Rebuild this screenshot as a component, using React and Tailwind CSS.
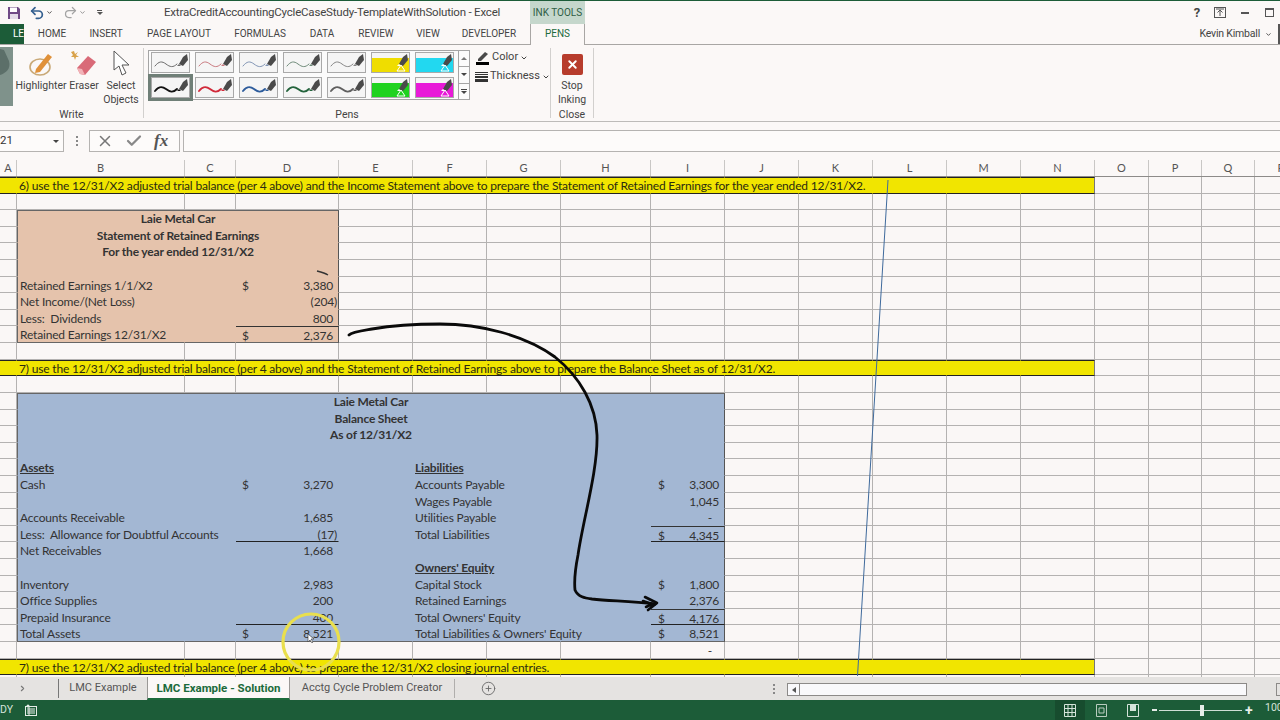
import React from 'react';
import clsx from 'clsx';
import { Undo2, Redo2, X, Check, CirclePlus, ChevronRight, ChevronDown } from 'lucide-react';

const GRID = 'grid grid-cols-[17px_168px_51px_103px_74px_74px_74px_90px_74px_74px_74px_74px_74px_74px_54px_53px_53px_53px]';
const LETTERS = ['A', 'B', 'C', 'D', 'E', 'F', 'G', 'H', 'I', 'J', 'K', 'L', 'M', 'N', 'O', 'P', 'Q', 'R'];
const B = 1, D = 3, F = 5, I = 8, N = 13;

// sheet contents, keyed by row index from the first yellow row
const YELLOW = {
  0: '6) use the 12/31/X2 adjusted trial balance (per 4 above) and the Income Statement above to prepare the Statement of Retained Earnings for the year ended 12/31/X2.',
  11: '7) use the 12/31/X2 adjusted trial balance (per 4 above) and the Statement of Retained Earnings above to prepare the Balance Sheet as of 12/31/X2.',
  29: '7) use the 12/31/X2 adjusted trial balance (per 4 above) to prepare the 12/31/X2 closing journal entries.',
};

const TITLES = {
  2: 'Laie Metal Car',
  3: 'Statement of Retained Earnings',
  4: 'For the year ended 12/31/X2',
  13: 'Laie Metal Car',
  14: 'Balance Sheet',
  15: 'As of 12/31/X2',
};

const LABELS = {
  6: { [B]: 'Retained Earnings 1/1/X2' },
  7: { [B]: 'Net Income/(Net Loss)' },
  8: { [B]: 'Less:  Dividends' },
  9: { [B]: 'Retained Earnings 12/31/X2' },
  17: { [B]: '!Assets', [F]: '!Liabilities' },
  18: { [B]: 'Cash', [F]: 'Accounts Payable' },
  19: { [F]: 'Wages Payable' },
  20: { [B]: 'Accounts Receivable', [F]: 'Utilities Payable' },
  21: { [B]: 'Less:  Allowance for Doubtful Accounts', [F]: 'Total Liabilities' },
  22: { [B]: 'Net Receivables' },
  23: { [F]: "!Owners' Equity" },
  24: { [B]: 'Inventory', [F]: 'Capital Stock' },
  25: { [B]: 'Office Supplies', [F]: 'Retained Earnings' },
  26: { [B]: 'Prepaid Insurance', [F]: "Total Owners' Equity" },
  27: { [B]: 'Total Assets', [F]: "Total Liabilities & Owners' Equity" },
};

const AMOUNTS = {
  6: { [D]: { $: true, v: '3,380' } },
  7: { [D]: { v: '(204)', paren: true } },
  8: { [D]: { v: '800' } },
  9: { [D]: { $: true, v: '2,376', top: true } },
  18: { [D]: { $: true, v: '3,270' }, [I]: { $: true, v: '3,300' } },
  19: { [I]: { v: '1,045' } },
  20: { [D]: { v: '1,685' }, [I]: { v: '-', dash: true } },
  21: { [D]: { v: '(17)', paren: true, bottom: true }, [I]: { $: true, v: '4,345', top: true, bottom: true } },
  22: { [D]: { v: '1,668' } },
  24: { [D]: { v: '2,983' }, [I]: { $: true, v: '1,800' } },
  25: { [D]: { v: '200' }, [I]: { v: '2,376' } },
  26: { [D]: { v: '400', bottom: true }, [I]: { $: true, v: '4,176', top: true, bottom: true } },
  27: { [D]: { $: true, v: '8,521' }, [I]: { $: true, v: '8,521' } },
  28: { [I]: { v: '-', dash: true } },
};

function boxOf(r, c) {
  if (r >= 2 && r <= 9 && c >= B && c <= D) return { fill: 'bg-[#e5c3ac]', first: r === 2, last: r === 9, right: c === D };
  if (r >= 13 && r <= 27 && c >= B && c <= I) return { fill: 'bg-[#a3b7d3]', first: r === 13, last: r === 27, right: c === I };
  return null;
}

function Amount({ cell, col }) {
  return (
    <div className={clsx('flex justify-between', col === D ? 'pl-[6px]' : 'pl-[7px]', cell.paren ? 'pr-[1px]' : cell.dash ? 'pr-[12px]' : 'pr-[5px]')}>
      <span>{cell.$ ? '$' : ''}</span>
      <span>{cell.v}</span>
    </div>
  );
}

function Cell({ r, c }) {
  const box = boxOf(r, c);
  const yellow = YELLOW[r] !== undefined && c <= N;
  const amount = AMOUNTS[r]?.[c];
  const label = LABELS[r]?.[c];
  const strong = label?.startsWith('!');
  return (
    <div
      className={clsx(
        'min-w-0 whitespace-pre border-r border-b',
        // grid items paint as a unit, so text spilling over the next cells has to sit above them
        (label || (yellow && c === B)) && 'z-[1]',
        !box && !yellow && 'border-[#b4b2b1]',
        box && 'border-transparent',
        box?.fill,
        box?.first && 'border-t border-t-[#666666]',
        box?.last && 'border-b-[#666666]',
        box?.right && 'border-r-[#555555]',
        box && c === B && 'border-l border-l-[#666666]',
        yellow && 'border-y border-x-transparent border-y-[#222222] bg-[#f1e500]',
        c === N && yellow && 'border-r-[#777777]',
        amount?.top && 'border-t border-t-[#333333]',
        amount?.bottom && 'border-b-[#222222]',
      )}
    >
      {yellow && c === B && <div className="-mt-[1px] pl-[2px] text-[#2b2b10]">{YELLOW[r]}</div>}
      {label && (
        <div className={clsx('pl-[2px]', strong && 'font-bold underline')}>{strong ? label.slice(1) : label}</div>
      )}
      {amount && <Amount cell={amount} col={c} />}
    </div>
  );
}

function TitleCell({ r }) {
  const blue = r >= 13;
  return (
    <div
      className={clsx(
        'whitespace-nowrap border-r border-l border-b border-transparent text-center font-bold',
        blue ? 'col-span-8 border-l-[#666666] border-r-[#555555] bg-[#a3b7d3]' : 'col-span-3 border-l-[#666666] border-r-[#555555] bg-[#e5c3ac]',
        (r === 2 || r === 13) && 'border-t border-t-[#666666] leading-[15px]',
      )}
    >
      {TITLES[r]}
    </div>
  );
}

function Row({ r }) {
  const cols = [];
  for (let c = 0; c < LETTERS.length; c++) {
    if (TITLES[r] && c === B) {
      cols.push(<TitleCell key={c} r={r} />);
      c += r >= 13 ? 7 : 2;
    } else {
      cols.push(<Cell key={c} r={r} c={c} />);
    }
  }
  return cols;
}

function Sheet() {
  const rows = Array.from({ length: 31 }, (_, i) => i);
  return (
    <div className="h-[500px] shrink-0 overflow-hidden bg-[#faf7f6] font-['Lato',sans-serif] text-[12px] leading-[17px] tracking-[-0.18px] text-[#333333]">
      <div className={clsx(GRID, 'auto-rows-[16.62px]')}>
        {rows.map((r) => <Row key={r} r={r} />)}
      </div>
    </div>
  );
}

function Squiggle({ color, w }) {
  return (
    <path d="M3 13 C7 8 10 8 14 11 C18 14 21 15 25 11" fill="none" stroke={color} strokeWidth={w} strokeLinecap="round" />
  );
}

function PenSwatch({ color, thick, fill, tri, selected }) {
  return (
    <div className={clsx('h-[21px] w-[39px] border border-[#a9a9a9] bg-[#f5f5f5]', selected && 'outline-3 outline-[#6f7f77]')}>
      <svg viewBox="0 0 37 19" className="block h-full w-full">
        {fill ? (
          <rect x="0" y="5" width="37" height="14" fill={fill} />
        ) : (
          <Squiggle color={color} w={thick ? 1.9 : 1} />
        )}
        <path d="M27 11 L31 4 L35 1 L36 7 L31 13 Z" fill="#4a4a4a" />
        <path d="M25 13 L27 11 L29 13 Z" fill={fill ? '#ffffff' : color} />
        {tri && <path d="M25 18 L29 12 L33 18 Z" fill="none" stroke="#ffffff" strokeWidth="1" />}
      </svg>
    </div>
  );
}

function Gallery() {
  return (
    <div className="flex h-[50px] w-[322px] shrink-0 border border-[#a5a5a5] bg-[#fbfbfb]">
      <div className="grid grid-cols-[repeat(7,39px)] gap-x-[5px] gap-y-[4px] py-[1px] pl-[2px]">
        <PenSwatch color="#6a6a6a" />
        <PenSwatch color="#c9787e" />
        <PenSwatch color="#8094b4" />
        <PenSwatch color="#6d8a78" />
        <PenSwatch color="#858585" />
        <PenSwatch fill="#efdd00" tri />
        <PenSwatch fill="#22d8f0" tri />
        <PenSwatch color="#111111" thick selected />
        <PenSwatch color="#d12a3a" thick />
        <PenSwatch color="#2d5c9c" thick />
        <PenSwatch color="#23633c" thick />
        <PenSwatch color="#5f5f5f" thick />
        <PenSwatch fill="#1fd21f" tri />
        <PenSwatch fill="#e81ad8" tri />
      </div>
      <div className="ml-[4px] flex w-[11px] flex-col divide-y divide-[#a5a5a5] border-l border-[#a5a5a5] text-[#444444]">
        <div className="flex flex-1 items-center justify-center"><div className="h-0 w-0 border-x-[3px] border-b-[3px] border-x-transparent border-b-[#777777]" /></div>
        <div className="flex flex-1 items-center justify-center"><div className="h-0 w-0 border-x-[3px] border-t-[3px] border-x-transparent border-t-[#444444]" /></div>
        <div className="flex flex-1 flex-col items-center justify-center gap-[1px]">
          <div className="h-[1px] w-[6px] bg-[#444444]" />
          <div className="h-0 w-0 border-x-[3px] border-t-[3px] border-x-transparent border-t-[#444444]" />
        </div>
      </div>
    </div>
  );
}

function RibbonButton({ width, icon, children }) {
  return (
    <div className={clsx('flex shrink-0 flex-col items-center pt-[5px] text-center leading-[14px]', width)}>
      <div className="mb-[1px] flex h-[28px] items-center justify-center">{icon}</div>
      {children}
    </div>
  );
}

function Group({ width, label, children }) {
  return (
    <div className={clsx('flex h-full shrink-0 flex-col', width)}>
      <div className="flex-1">{children}</div>
      <div className="-mb-[1px] h-[14px] text-center leading-[14px]">{label}</div>
    </div>
  );
}

function Separator() {
  return <div className="my-[3px] w-[1px] shrink-0 bg-[#d2d0ce]" />;
}

function Ribbon() {
  return (
    <div className="flex h-[77px] shrink-0 border-b border-[#bdbbb9] bg-[#fbf8f7] text-[10.5px] text-[#444444]">
      <Group width="w-[143px]" label="Write">
        <div className="flex h-full">
          <div className="my-[2px] w-[13px] shrink-0 bg-[#7f928b]">
            <svg width="13" height="40" viewBox="0 0 13 40">
              <path d="M0 28 C6 26 11 22 9 14 L4 3 L0 2 Z" fill="#5c6f69" />
            </svg>
          </div>
          <RibbonButton width="w-[56px]" icon={
            <svg width="30" height="28" viewBox="0 0 30 28">
              <ellipse cx="14" cy="17" rx="10" ry="8" fill="none" stroke="#c9a977" strokeWidth="1.6" />
              <path d="M10 19 L22 4 L26 7 L14 22 L9 23 Z" fill="#e0913a" />
            </svg>
          }>Highlighter</RibbonButton>
          <RibbonButton width="w-[30px]" icon={
            <svg width="30" height="28" viewBox="0 0 30 28">
              <path d="M8 18 L19 6 L27 12 L16 25 L11 24 Z" fill="#d96a78" />
              <path d="M8 18 L11 24 L16 25 L13 19 Z" fill="#f2b3b8" />
              <path d="M5 1 L6 4 L9 2 L7 5 L10 7 L7 7 L6 10 L5 7 L2 7 L4 5 L2 2 Z" fill="#d9a24a" />
            </svg>
          }>Eraser</RibbonButton>
          <RibbonButton width="w-[44px]" icon={
            <svg width="20" height="28" viewBox="0 0 20 28">
              <path d="M3 1 L3 20 L8 16 L11 25 L15 23 L11 15 L18 15 Z" fill="#ffffff" stroke="#555555" strokeWidth="1" />
            </svg>
          }>Select Objects</RibbonButton>
        </div>
      </Group>
      <Separator />
      <Group width="w-[406px]" label="Pens">
        <div className="flex pt-[5px] pl-[4px]">
          <Gallery />
          <div className="-mt-[1px] ml-[5px] flex flex-col gap-[2px] text-[11px]">
            <div className="flex h-[17px] items-center gap-[2px]">
              <svg width="15" height="15" viewBox="0 0 15 15">
                <path d="M3 9 L10 2 L13 4 L6 11 L3 11 Z" fill="#4a4a4a" />
                <rect x="1" y="12" width="13" height="3" fill="#000000" />
              </svg>
              <span>Color</span>
              <ChevronDown size={8} strokeWidth={3} />
            </div>
            <div className="flex h-[17px] items-center gap-[2px]">
              <div className="flex w-[13px] flex-col gap-[1px]">
                <div className="h-[1px] bg-[#333333]" />
                <div className="h-[1px] bg-[#333333]" />
                <div className="h-[2px] bg-[#333333]" />
                <div className="h-[3px] bg-[#333333]" />
              </div>
              <span>Thickness</span>
              <ChevronDown size={8} strokeWidth={3} />
            </div>
          </div>
        </div>
      </Group>
      <Separator />
      <Group width="w-[42px]" label="Close">
        <RibbonButton width="w-full" icon={
          <div className="flex h-[21px] w-[21px] items-center justify-center rounded-[2px] bg-[#b73c2c]">
            <X size={13} color="#ffffff" strokeWidth={3.5} />
          </div>
        }>Stop Inking</RibbonButton>
      </Group>
      <Separator />
    </div>
  );
}

function TitleBar() {
  return (
    <div className="flex h-[24px] shrink-0 items-center border-t border-[#1c5c38] bg-[#fbf8f7] text-[11.5px] text-[#444444]">
      <svg width="14" height="14" viewBox="0 0 14 14" className="ml-[7px] shrink-0">
        <path d="M1 1 H11 L13 3 V13 H1 Z" fill="#6f4a86" />
        <rect x="3" y="1.5" width="7" height="4.5" fill="#ffffff" />
        <rect x="3" y="8" width="8" height="5" fill="#e4dde9" />
      </svg>
      <Undo2 size={16} strokeWidth={2.6} color="#345f8f" className="ml-[8px] shrink-0" />
      <ChevronDown size={7} strokeWidth={3} className="ml-[1px] shrink-0" />
      <Redo2 size={15} strokeWidth={2} color="#a3a3a3" className="ml-[10px] shrink-0" />
      <ChevronDown size={7} strokeWidth={3} color="#8a8a8a" className="ml-[1px] shrink-0" />
      <div className="ml-[10px] flex w-[7px] shrink-0 flex-col items-center gap-[1px]">
        <div className="h-[1px] w-[5px] bg-[#555555]" />
        <div className="h-0 w-0 border-x-[3px] border-t-[3px] border-x-transparent border-t-[#555555]" />
      </div>
      <div className="ml-[61px] w-[303px] shrink-0 whitespace-nowrap tracking-[-0.2px]">ExtraCreditAccountingCycleCaseStudy-TemplateWithSolution - Excel</div>
      <div className="ml-[63px] flex h-full w-[55px] shrink-0 items-center justify-center bg-[#c5d7cc] text-[10px] text-[#2f5d45]">INK TOOLS</div>
      <div className="ml-[595px] flex w-[100px] shrink-0 items-center">
        <span className="w-[34px] text-center text-[13px] font-bold">?</span>
        <svg width="12" height="11" viewBox="0 0 12 11" className="shrink-0">
          <rect x="0.5" y="0.5" width="11" height="10" fill="none" stroke="#555555" />
          <path d="M6 9 V4 M3.5 5.5 L6 3 L8.5 5.5 M2 2 H10" fill="none" stroke="#555555" />
        </svg>
        <div className="ml-[15px] h-[2px] w-[8px] shrink-0 bg-[#555555]" />
        <div className="ml-[16px] h-[9px] w-[9px] shrink-0 border border-t-2 border-[#555555]" />
      </div>
    </div>
  );
}

const TABS = [
  ['HOME', 'w-[50px] ml-[3px]'],
  ['INSERT', 'w-[58px]'],
  ['PAGE LAYOUT', 'w-[88px]'],
  ['FORMULAS', 'w-[74px]'],
  ['DATA', 'w-[50px]'],
  ['REVIEW', 'w-[58px]'],
  ['VIEW', 'w-[46px]'],
  ['DEVELOPER', 'w-[76px]'],
];

function TabRow() {
  return (
    <div className="flex h-[21px] shrink-0 border-b border-[#a8a6a4] bg-[#fbf8f7] text-[10px] leading-[20px] text-[#444444]">
      <div className="w-[24px] shrink-0 bg-[#1c5c38] text-right text-[#ffffff]">LE</div>
      {TABS.map(([name, cls]) => (
        <div key={name} className={clsx('shrink-0 text-center', cls)}>{name}</div>
      ))}
      <div className="ml-[3px] h-[21px] w-[55px] shrink-0 border-x border-[#a8a6a4] bg-[#fbf8f7] text-center text-[#1c6b3c]">PENS</div>
      <div className="ml-auto flex items-center pr-[6px]">
        <span className="text-[10.5px] tracking-[-0.2px]">Kevin Kimball</span>
        <ChevronDown size={7} strokeWidth={3} className="ml-[5px]" />
      </div>
      <div className="w-[2px] shrink-0 bg-[#555555]" />
    </div>
  );
}

function FormulaBar() {
  return (
    <div className="flex h-[38px] shrink-0 bg-[#fbf8f7] py-[8px] text-[11.5px] text-[#333333]">
      <div className="flex h-[22px] w-[64px] shrink-0 items-center justify-between border border-l-0 border-[#b5b3b1] bg-[#fdfbfa] pr-[4px]">
        <span>21</span>
        <div className="h-0 w-0 border-x-[3px] border-t-[3px] border-x-transparent border-t-[#444444]" />
      </div>
      <div className="flex w-[25px] shrink-0 flex-col items-center justify-center gap-[2px]">
        <div className="h-[2px] w-[2px] bg-[#888888]" />
        <div className="h-[2px] w-[2px] bg-[#888888]" />
        <div className="h-[2px] w-[2px] bg-[#888888]" />
      </div>
      <div className="flex h-[22px] w-[91px] shrink-0 items-center gap-[11px] border border-[#b5b3b1] bg-[#fdfbfa] pl-[6px]">
        <X size={18} color="#777777" strokeWidth={2} />
        <Check size={18} color="#888888" strokeWidth={3} />
        <span className="font-['Liberation_Serif',serif] text-[17px] font-bold text-[#555555] italic">fx</span>
      </div>
      <div className="ml-[3px] h-[22px] flex-1 border border-r-0 border-[#b5b3b1] bg-[#fdfbfa]" />
    </div>
  );
}

function ColumnHeader() {
  return (
    <div className={clsx(GRID, "h-[17px] shrink-0 border-b border-[#8d8b89] bg-[#fbf8f7] font-['Lato',sans-serif] text-[11px] leading-[16px] text-[#555555]")}>
      {LETTERS.map((l) => (
        <div key={l} className="overflow-hidden border-r border-[#c9c7c5] text-center">{l}</div>
      ))}
    </div>
  );
}

function SheetTabs() {
  return (
    <div className="flex h-[23px] shrink-0 items-stretch bg-[#e5e3e1] text-[11px] leading-[22px] text-[#555555]">
      <div className="flex w-[58px] shrink-0 items-center justify-end pr-[31px]">
        <ChevronRight size={9} strokeWidth={3} color="#777777" />
      </div>
      <div className="my-[2px] w-[1px] shrink-0 bg-[#777777]" />
      <div className="w-[88px] shrink-0 text-center">LMC Example</div>
      <div className="w-[143px] shrink-0 border-x border-b-2 border-x-[#9a9896] border-b-[#1c6b3c] bg-[#fbf8f7] text-center text-[11.5px] font-bold text-[#1c6b3c]">LMC Example - Solution</div>
      <div className="w-[164px] shrink-0 text-center">Acctg Cycle Problem Creator</div>
      <div className="my-[2px] w-[1px] shrink-0 bg-[#b0aeac]" />
      <div className="ml-[26px] flex shrink-0 items-center">
        <CirclePlus size={15} strokeWidth={1.4} color="#666666" />
      </div>
      <div className="ml-[271px] flex w-[13px] shrink-0 flex-col items-center justify-center gap-[2px]">
        <div className="h-[2px] w-[2px] bg-[#888888]" />
        <div className="h-[2px] w-[2px] bg-[#888888]" />
        <div className="h-[2px] w-[2px] bg-[#888888]" />
      </div>
      <div className="mt-[6px] ml-[7px] flex h-[13px] w-[460px] shrink-0 border border-[#8c8a88] bg-[#f9f9fb]">
        <div className="flex w-[12px] items-center justify-center border-r border-[#8c8a88]">
          <div className="h-0 w-0 border-y-[3px] border-r-[4px] border-y-transparent border-r-[#555555]" />
        </div>
      </div>
      <div className="mt-[6px] ml-[29px] h-[13px] w-[10px] shrink-0 border border-[#8c8a88]" />
    </div>
  );
}

function StatusBar() {
  return (
    <div className="flex h-[20px] shrink-0 items-center bg-[#1c5c38] text-[10.5px] text-[#d5e3da]">
      <span className="w-[25px] shrink-0">DY</span>
      <svg width="12" height="12" viewBox="0 0 12 12" className="shrink-0">
        <rect x="0.5" y="2.5" width="11" height="9" fill="none" stroke="#e5ede8" />
        <path d="M2 5 H10 M2 7 H10 M2 9 H10 M4 3 V11" stroke="#e5ede8" />
        <circle cx="3" cy="2" r="1.5" fill="#e5ede8" />
      </svg>
      <div className="ml-auto flex h-full w-[225px] shrink-0 overflow-hidden">
        <div className="flex w-[30px] shrink-0 items-center justify-center bg-[#174c2e]">
          <svg width="12" height="13" viewBox="0 0 12 13">
            <path d="M0.5 0.5 H11.5 V12.5 H0.5 Z M4 0.5 V12.5 M8 0.5 V12.5 M0.5 4.5 H11.5 M0.5 8.5 H11.5" fill="none" stroke="#d5e3da" />
          </svg>
        </div>
        <div className="flex w-[32px] shrink-0 items-center justify-center">
          <svg width="11" height="13" viewBox="0 0 11 13">
            <path d="M0.5 0.5 H10.5 V12.5 H0.5 Z M3 4 H8 V9 H3 Z" fill="none" stroke="#b8ccbf" />
          </svg>
        </div>
        <div className="flex w-[32px] shrink-0 items-center justify-center">
          <svg width="12" height="13" viewBox="0 0 12 13">
            <path d="M0.5 0.5 H11.5 V12.5 H0.5 Z" fill="none" stroke="#d5e3da" />
            <path d="M3 1 H9 V7 H3 Z" fill="#d5e3da" />
          </svg>
        </div>
        <div className="flex w-[106px] shrink-0 items-center pl-[3px]">
          <div className="h-[2px] w-[5px] bg-[#e5ede8]" />
          <div className="relative ml-[2px] h-[1px] w-[83px] bg-[#cfded5]">
            <div className="absolute top-[-5px] left-[41px] h-[11px] w-[4px] bg-[#e5ede8]" />
          </div>
          <span className="ml-[3px] text-[14px] leading-none font-bold text-[#e5ede8]">+</span>
        </div>
        <span className="pl-[10px] whitespace-nowrap">100%</span>
      </div>
    </div>
  );
}

function Ink() {
  return (
    <svg viewBox="0 0 1280 720" className="pointer-events-none absolute inset-0 z-10 h-[720px] w-[1280px]">
      <path d="M888 180 L857.5 676" stroke="#3f6a9c" strokeWidth="1" fill="none" />
      <path d="M317 271 C321 272 325 273 328 275" stroke="#333333" strokeWidth="1.3" fill="none" />
      <circle cx="311" cy="642" r="28" stroke="#e9df4e" strokeWidth="3.2" fill="none" />
      <path d="M308 634 L308 642 L310 640 L312 643 L313 642 L311 639 L314 639 Z" fill="#ffffff" stroke="#333333" strokeWidth="0.6" />
      <path
        d="M349 335 C352 332 360 331 372 329 C395 325 420 324 440 324 C480 324 525 335 555 357 C580 377 596 405 597 435 C598 470 583 520 578 555 C575 570 574 580 575 590 C578 597 585 598 592 599 C610 601 630 601 655 604"
        stroke="#0a0a0a"
        strokeWidth="2.8"
        strokeLinecap="round"
        fill="none"
      />
      <path d="M645 597 L657 603 L648 610 M643 601 L652 604 L646 607" stroke="#0a0a0a" strokeWidth="2.6" strokeLinejoin="round" strokeLinecap="round" fill="none" />
    </svg>
  );
}

export default function App() {
  return (
    <div className="relative flex h-[720px] w-[1280px] flex-col overflow-hidden bg-[#fbf8f7] font-['Roboto',sans-serif]">
      <TitleBar />
      <TabRow />
      <Ribbon />
      <FormulaBar />
      <ColumnHeader />
      <Sheet />
      <SheetTabs />
      <StatusBar />
      <Ink />
    </div>
  );
}
